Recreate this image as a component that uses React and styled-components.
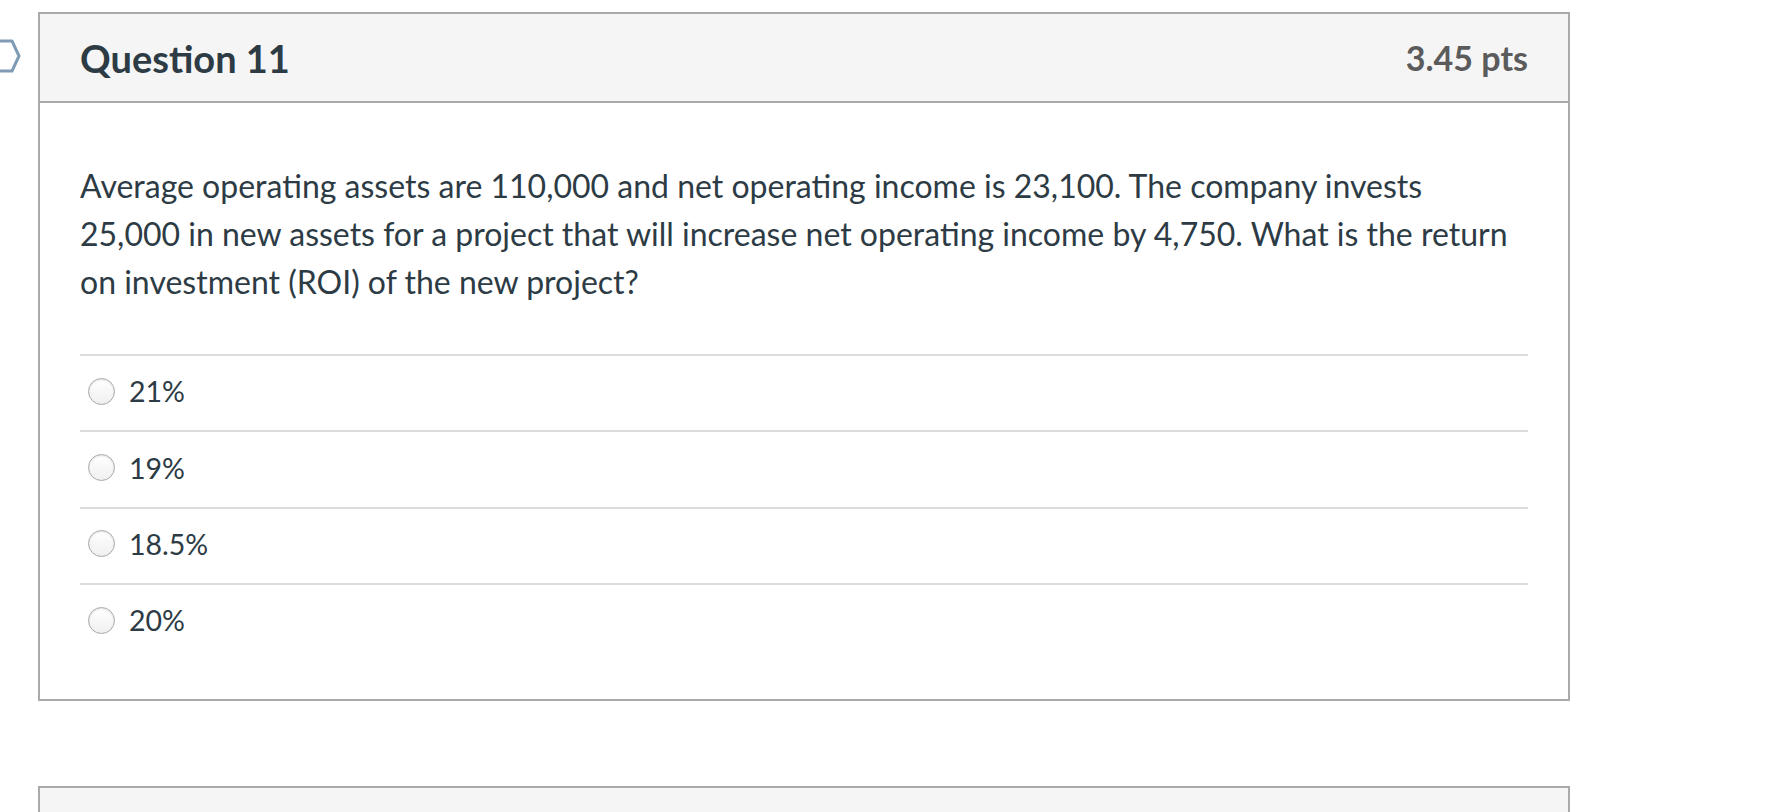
import React from "react";
import styled, { createGlobalStyle } from "styled-components";

const GlobalStyle = createGlobalStyle`
  html, body {
    margin: 0;
    padding: 0;
    background: #ffffff;
  }
  body {
    font-family: Lato, "Open Sans", "Liberation Sans", sans-serif;
    color: #2d3b45;
  }
`;

const Page = styled.div`
  position: relative;
  padding: 12px 0 0 38px;
  width: 1532px;
`;

const Flag = styled.svg`
  position: absolute;
  left: -14px;
  top: 39px;
  width: 36px;
  height: 34px;
`;

const Card = styled.div`
  border: 2px solid #aaaaaa;
  background: #fff;
  margin-bottom: 85px;
`;

const Header = styled.div`
  display: flex;
  align-items: center;
  justify-content: space-between;
  height: 87px;
  padding: 0 40px;
  background: #f5f5f5;
  border-bottom: 2px solid #aaaaaa;
`;

const Title = styled.h2`
  margin: 0;
  font-size: 38px;
  font-weight: 700;
  color: #2d3b45;
`;

const Points = styled.span`
  font-size: 34px;
  font-weight: 700;
  color: #5b5b5b;
`;

const Body = styled.div`
  padding: 59px 40px 39px;
`;

const QuestionText = styled.p`
  margin: 0 0 48px;
  font-size: 32px;
  line-height: 48px;
  color: #2d3b45;
`;

const Answers = styled.div`
  display: flex;
  flex-direction: column;
`;

const AnswerRow = styled.label`
  display: flex;
  align-items: center;
  gap: 14px;
  height: 74.4px;
  box-sizing: content-box;
  padding: 0 0 0 8px;
  border-top: 2px solid #dcdcdc;
  font-size: 28.5px;
  color: #2d3b45;
`;

const AnswerText = styled.span`
  position: relative;
  top: -2px;
`;

const Radio = styled.span`
  position: relative;
  top: -2px;
  width: 25px;
  height: 25px;
  border-radius: 50%;
  border: 1px solid #a9a9a9;
  background: linear-gradient(#ffffff, #f0f0f0);
  box-shadow: inset 0 1px 2px rgba(0, 0, 0, 0.12);
  flex-shrink: 0;
`;

const NextCard = styled.div`
  height: 40px;
  border: 2px solid #aaaaaa;
  border-bottom: none;
  background: #f5f5f5;
`;

const answers = ["21%", "19%", "18.5%", "20%"];

const App = () => {
  return (
    <React.Fragment>
      <GlobalStyle />
      <Page>
        <Flag viewBox="0 0 36 34">
          <path
            d="M2 2 H26 L33 17 L26 32 H2"
            fill="none"
            stroke="#7f9bb3"
            strokeWidth="3"
            strokeLinejoin="round"
          />
        </Flag>
        <Card>
          <Header>
            <Title>Question 11</Title>
            <Points>3.45 pts</Points>
          </Header>
          <Body>
            <QuestionText>
              Average operating assets are 110,000 and net operating income is
              23,100. The company invests 25,000 in new assets for a project
              that will increase net operating income by 4,750. What is the
              return on investment (ROI) of the new project?
            </QuestionText>
            <Answers>
              {answers.map((answer) => (
                <AnswerRow key={answer}>
                  <Radio />
                  <AnswerText>{answer}</AnswerText>
                </AnswerRow>
              ))}
            </Answers>
          </Body>
        </Card>
        <NextCard />
      </Page>
    </React.Fragment>
  );
};

export default App;
